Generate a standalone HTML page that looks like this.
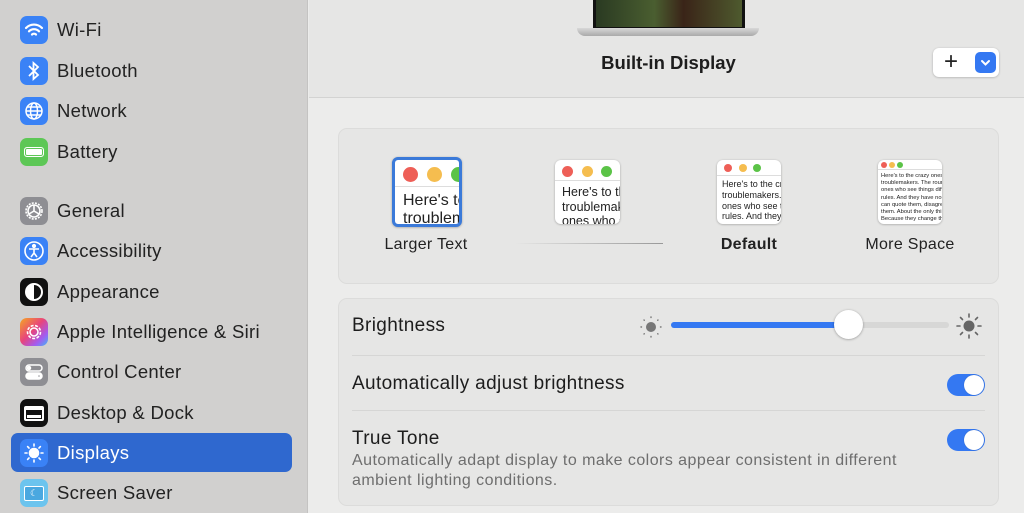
<!DOCTYPE html>
<html><head><meta charset="utf-8"><style>
*{margin:0;padding:0;box-sizing:border-box}
body{width:1024px;height:513px;overflow:hidden;font-family:"Liberation Sans",sans-serif;background:#ececeb;position:relative;color:#1d1d1d}
.sb{position:absolute;left:0;top:0;width:308px;height:513px;background:#d1d0cf;border-right:1px solid #c4c3c2}
.it{position:absolute;left:20px;height:28px;display:flex;align-items:center;font-size:18.5px;letter-spacing:0.3px;color:#222;white-space:nowrap}
.ic{width:28px;height:28px;border-radius:7px;margin-right:9px;display:flex;align-items:center;justify-content:center;flex:none;letter-spacing:0}
.sel{position:absolute;left:11px;top:433px;width:281px;height:39px;background:#2f68cf;border-radius:7px}
.hdr{position:absolute;left:309px;top:0;right:0;height:98px;background:#e6e6e5;border-bottom:1px solid #d3d3d2}
.card{position:absolute;left:338px;width:661px;background:#e6e6e5;border:1px solid #dcdcdb;border-radius:9px}
.th{position:absolute;background:#fff;border-radius:6px;overflow:hidden;box-shadow:0 0.5px 2px rgba(0,0,0,.3)}
.th .bar{position:absolute;left:0;right:0;top:0;border-bottom:1px solid #ddd}
.th .d{position:absolute;border-radius:50%}
.th p{position:absolute;white-space:nowrap;color:#222}
.lab{position:absolute;font-size:16px;letter-spacing:0.3px;color:#222;text-align:center;white-space:nowrap}
.row{position:absolute;left:352px;font-size:19px;letter-spacing:0.35px;color:#1d1d1d;white-space:nowrap}
.div{position:absolute;left:352px;width:633px;height:1px;background:#d6d6d5}
.tg{position:absolute;left:947px;width:38px;height:22px;border-radius:11px;background:#3478f2}
.tg::after{content:"";position:absolute;right:1px;top:1px;width:20px;height:20px;border-radius:50%;background:#fff;box-shadow:0 0 1px rgba(0,0,0,.3)}
</style></head><body>
<div class="sb">
<div class="sel"></div>
<div class="it" style="top:16px"><div class="ic" style="background:#3a82f6"><svg width="20" height="16" viewBox="0 0 20 16" fill="none" stroke="#fff" stroke-width="2.2" stroke-linecap="round"><path d="M2 6a11 11 0 0 1 16 0"/><path d="M5 9.3a7 7 0 0 1 10 0"/><path d="M8 12.5a3 3 0 0 1 4 0"/></svg></div>Wi-Fi</div>
<div class="it" style="top:57px"><div class="ic" style="background:#3a82f6"><svg width="14" height="20" viewBox="0 0 14 20" fill="none" stroke="#fff" stroke-width="1.8"><path d="M2 5l9 9-4.5 4V2L11 6 2 15"/></svg></div>Bluetooth</div>
<div class="it" style="top:97px"><div class="ic" style="background:#3a82f6"><svg width="20" height="20" viewBox="0 0 20 20" fill="none" stroke="#fff" stroke-width="1.5"><circle cx="10" cy="10" r="8"/><ellipse cx="10" cy="10" rx="3.5" ry="8"/><path d="M2 10h16M3.5 6h13M3.5 14h13"/></svg></div>Network</div>
<div class="it" style="top:138px"><div class="ic" style="background:#5dc756"><div style="width:20px;height:10px;border:1.5px solid #fff;border-radius:3px;background:#fff;box-shadow:inset 0 0 0 1px #5dc756"></div></div>Battery</div>
<div class="it" style="top:197px"><div class="ic" style="background:#8e8e93"><svg width="22" height="22" viewBox="0 0 22 22" fill="none" stroke="#fff" stroke-width="1.6"><circle cx="11" cy="11" r="8" stroke-dasharray="2 1.2"/><circle cx="11" cy="11" r="6"/><path d="M11 11L11 5M11 11l5 3M11 11l-5 3"/></svg></div>General</div>
<div class="it" style="top:237px"><div class="ic" style="background:#3a82f6"><svg width="22" height="22" viewBox="0 0 22 22" fill="none" stroke="#fff" stroke-width="1.6"><circle cx="11" cy="11" r="9"/><circle cx="11" cy="6" r="1.3" fill="#fff"/><path d="M6 9h10M11 9v4l-3 4M11 13l3 4"/></svg></div>Accessibility</div>
<div class="it" style="top:278px"><div class="ic" style="background:#111"><div style="width:18px;height:18px;border-radius:50%;border:2px solid #fff;background:linear-gradient(90deg,#fff 50%,#111 50%)"></div></div>Appearance</div>
<div class="it" style="top:318px"><div class="ic" style="background:linear-gradient(135deg,#f5a623,#e8457b 45%,#a35bf0 75%,#3fb8f5)"><svg width="20" height="20" viewBox="0 0 20 20" fill="none" stroke="#fff" stroke-width="1.6"><circle cx="10" cy="10" r="6.5" stroke-dasharray="3 1.5"/><circle cx="10" cy="10" r="4"/></svg></div>Apple Intelligence &amp; Siri</div>
<div class="it" style="top:358px"><div class="ic" style="background:#8e8e93"><svg width="20" height="18" viewBox="0 0 20 18" fill="none" stroke="#fff" stroke-width="1.5"><rect x="2" y="2" width="16" height="6" rx="3"/><circle cx="5" cy="5" r="1.5" fill="#fff"/><rect x="2" y="10" width="16" height="6" rx="3" fill="#fff"/><circle cx="15" cy="13" r="1.5" fill="#8e8e93"/></svg></div>Control Center</div>
<div class="it" style="top:399px"><div class="ic" style="background:#111"><div style="width:20px;height:15px;border:2px solid #fff;border-radius:2px;border-top-width:4px;background:#111;position:relative"><div style="position:absolute;left:1px;right:1px;bottom:1px;height:3px;background:#fff"></div></div></div>Desktop &amp; Dock</div>
<div class="it" style="top:439px;color:#fff"><div class="ic" style="background:#3a82f6"><svg width="22" height="22" viewBox="0 0 22 22" stroke="#fff" stroke-width="1.6" stroke-linecap="round"><circle cx="11" cy="11" r="4.5" fill="#fff"/><path d="M11 2v2M11 18v2M2 11h2M18 11h2M4.6 4.6l1.4 1.4M16 16l1.4 1.4M4.6 17.4L6 16M16 6l1.4-1.4"/></svg></div>Displays</div>
<div class="it" style="top:479px"><div class="ic" style="background:#6cc4ee"><div style="width:20px;height:15px;border:1.5px solid #fff;border-radius:2px;background:#4aa8e0;color:#fff;font-size:9px;line-height:12px;text-align:center">☾</div></div>Screen Saver</div>
</div>

<div class="hdr">
<div style="position:absolute;left:284px;top:0;width:152px;height:30px;background:linear-gradient(90deg,#2a3a22,#4a5e30 40%,#3a2418 60%,#4e5a2e);border:3px solid #111;border-top:none"></div>
<div style="position:absolute;left:268px;top:28px;width:182px;height:8px;background:linear-gradient(#d8d8d8,#aaa);border-radius:0 0 8px 8px"></div>
<div style="position:absolute;left:0;right:0;top:52px;text-align:center;font-size:18.5px;font-weight:bold;color:#1d1d1d;padding-left:4px">Built-in Display</div>
<div style="position:absolute;left:624px;top:48px;width:66px;height:29px;background:#fff;border-radius:6px;box-shadow:0 0.5px 2px rgba(0,0,0,.25)">
<div style="position:absolute;left:11px;top:1px;font-size:24px;color:#222;line-height:26px">+</div>
<div style="position:absolute;left:42px;top:4px;width:21px;height:21px;background:#3478f2;border-radius:5px"><svg width="21" height="21" viewBox="0 0 21 21" fill="none" stroke="#fff" stroke-width="2" stroke-linecap="round"><path d="M7 9l3.5 3.5L14 9"/></svg></div>
</div>
</div>

<div class="card" style="top:128px;height:156px">
</div>
<div class="th" style="left:392px;top:157px;width:70px;height:70px;border:3px solid #3b7ad9">
<div class="bar" style="height:27px"></div>
<div class="d" style="left:8px;top:7px;width:15px;height:15px;background:#ee5f57"></div>
<div class="d" style="left:32px;top:7px;width:15px;height:15px;background:#f5bd4f"></div>
<div class="d" style="left:56px;top:7px;width:15px;height:15px;background:#5bc347"></div>
<p style="left:8px;top:32px;font-size:16px;line-height:18px">Here's to the<br>troublemakers</p>
</div>
<div class="th" style="left:555px;top:160px;width:65px;height:64px">
<div class="bar" style="height:21px"></div>
<div class="d" style="left:7px;top:6px;width:11px;height:11px;background:#ee5f57"></div>
<div class="d" style="left:27px;top:6px;width:11px;height:11px;background:#f5bd4f"></div>
<div class="d" style="left:46px;top:6px;width:11px;height:11px;background:#5bc347"></div>
<p style="left:7px;top:25px;font-size:12.5px;line-height:14.5px">Here's to the<br>troublemakers<br>ones who see</p>
</div>
<div class="th" style="left:717px;top:160px;width:64px;height:64px">
<div class="bar" style="height:16px"></div>
<div class="d" style="left:7px;top:4px;width:8px;height:8px;background:#ee5f57"></div>
<div class="d" style="left:22px;top:4px;width:8px;height:8px;background:#f5bd4f"></div>
<div class="d" style="left:36px;top:4px;width:8px;height:8px;background:#5bc347"></div>
<p style="left:5px;top:19px;font-size:9px;line-height:10.8px">Here's to the crazy<br>troublemakers. The<br>ones who see things<br>rules. And they have</p>
</div>
<div class="th" style="left:878px;top:160px;width:64px;height:64px">
<div class="bar" style="height:10px"></div>
<div class="d" style="left:3px;top:2px;width:6px;height:6px;background:#ee5f57"></div>
<div class="d" style="left:11px;top:2px;width:6px;height:6px;background:#f5bd4f"></div>
<div class="d" style="left:19px;top:2px;width:6px;height:6px;background:#5bc347"></div>
<p style="left:3px;top:13px;font-size:5.8px;line-height:7.2px">Here's to the crazy ones<br>troublemakers. The round<br>ones who see things diff<br>rules. And they have no<br>can quote them, disagree<br>them. About the only thing<br>Because they change thi</p>
</div>
<div class="lab" style="left:376px;top:236px;width:100px">Larger Text</div>
<div style="position:absolute;left:515px;top:243px;width:148px;height:1px;background:linear-gradient(90deg,rgba(150,150,150,0),#999)"></div>
<div class="lab" style="left:699px;top:236px;width:100px;font-weight:bold">Default</div>
<div class="lab" style="left:860px;top:236px;width:100px">More Space</div>

<div class="card" style="top:298px;height:208px"></div>
<div class="row" style="top:315px">Brightness</div>
<svg style="position:absolute;left:638px;top:314px" width="26" height="26" viewBox="0 0 26 26"><circle cx="13" cy="13" r="5" fill="#777"/><g stroke="#777" stroke-width="1.4" stroke-linecap="round"><path d="M13 3v.5M13 22.5v.5M3 13h.5M22.5 13h.5M6 6l.3.3M19.7 19.7l.3.3M6 20l.3-.3M19.7 6.3L20 6"/></g></svg>
<div style="position:absolute;left:671px;top:322px;width:278px;height:6px;border-radius:3px;background:#d7d7d6"></div>
<div style="position:absolute;left:671px;top:322px;width:180px;height:6px;border-radius:3px;background:#3478f2"></div>
<div style="position:absolute;left:834px;top:310px;width:29px;height:29px;border-radius:50%;background:#fff;box-shadow:0 0.5px 2.5px rgba(0,0,0,.35)"></div>
<svg style="position:absolute;left:955px;top:312px" width="28" height="28" viewBox="0 0 28 28"><circle cx="14" cy="14" r="5.5" fill="#666"/><g stroke="#666" stroke-width="1.6" stroke-linecap="round"><path d="M14 2v3M14 23v3M2 14h3M23 14h3M5.5 5.5l2 2M20.5 20.5l2 2M5.5 22.5l2-2M20.5 7.5l2-2"/></g></svg>
<div class="div" style="top:355px"></div>
<div class="row" style="top:373px">Automatically adjust brightness</div>
<div class="tg" style="top:374px"></div>
<div class="div" style="top:410px"></div>
<div class="row" style="top:428px">True Tone</div>
<div class="tg" style="top:429px"></div>
<div style="position:absolute;left:352px;top:451px;font-size:16px;letter-spacing:0.45px;line-height:20px;color:#6e6e6e;white-space:nowrap">Automatically adapt display to make colors appear consistent in different<br>ambient lighting conditions.</div>
</body></html>
